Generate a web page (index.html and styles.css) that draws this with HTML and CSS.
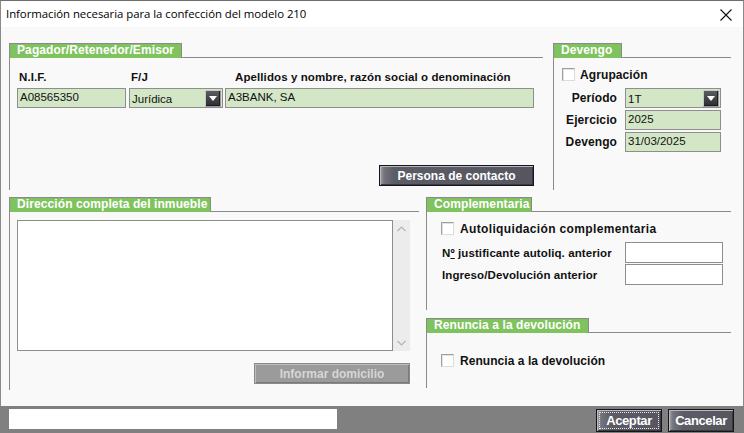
FILE: index.html
```html
<!DOCTYPE html>
<html lang="es">
<head>
<meta charset="utf-8">
<title>Modelo 210</title>
<link rel="stylesheet" href="styles.css">
</head>
<body>
<div class="window">
  <div class="titlebar">
    <span class="title">Información necesaria para la confección del modelo 210</span>
    <svg class="close" width="12" height="12" viewBox="0 0 12 12"><path d="M0.5 0.5 L11.5 11.5 M11.5 0.5 L0.5 11.5" stroke="#111" stroke-width="1.1" fill="none"/></svg>
  </div>
  <div class="content">
    <div class="row1">
      <section class="group g-pagador">
        <div class="ghead"><span class="tab tab-pagador">Pagador/Retenedor/Emisor</span><span class="hline"></span></div>
        <div class="gbody pag-body">
          <div class="pag-fields">
            <div class="fcol f-nif">
              <span class="lbl">N.I.F.</span>
              <div class="field green">A08565350</div>
            </div>
            <div class="fcol f-fj">
              <span class="lbl">F/J</span>
              <div class="field green select"><span class="seltext">Jurídica</span><span class="arrow"><svg width="8" height="5" viewBox="0 0 8 5"><path d="M0 0 H8 L4 5 Z" fill="#fff"/></svg></span></div>
            </div>
            <div class="fcol f-nom">
              <span class="lbl lbl-nom">Apellidos y nombre, razón social o denominación</span>
              <div class="field green">A3BANK, SA</div>
            </div>
          </div>
          <div class="btn-row"><button class="btn dark btn-contacto">Persona de contacto</button></div>
        </div>
      </section>
      <section class="group g-devengo">
        <div class="ghead"><span class="tab tab-devengo">Devengo</span><span class="hline"></span></div>
        <div class="gbody dev-body">
          <div class="chk-row"><span class="chk"></span><span class="lbl chk-lbl">Agrupación</span></div>
          <div class="dev-grid">
            <span class="lbl r">Período</span>
            <div class="field green select"><span class="seltext">1T</span><span class="arrow"><svg width="8" height="5" viewBox="0 0 8 5"><path d="M0 0 H8 L4 5 Z" fill="#fff"/></svg></span></div>
            <span class="lbl r">Ejercicio</span>
            <div class="field green">2025</div>
            <span class="lbl r">Devengo</span>
            <div class="field green">31/03/2025</div>
          </div>
        </div>
      </section>
    </div>
    <div class="row2">
      <section class="group g-dir">
        <div class="ghead"><span class="tab tab-dir">Dirección completa del inmueble</span><span class="hline"></span></div>
        <div class="gbody dir-body">
          <div class="memo">
            <div class="memo-text"></div>
            <div class="vscroll">
              <svg width="9" height="6" viewBox="0 0 9 6"><path d="M0.5 5 L4.5 1 L8.5 5" stroke="#b4b4b4" stroke-width="1.2" fill="none"/></svg>
              <svg width="9" height="6" viewBox="0 0 9 6"><path d="M0.5 1 L4.5 5 L8.5 1" stroke="#b4b4b4" stroke-width="1.2" fill="none"/></svg>
            </div>
          </div>
          <div class="btn-row"><button class="btn disabled btn-domicilio">Informar domicilio</button></div>
        </div>
      </section>
      <div class="rcol">
        <section class="group g-comp">
          <div class="ghead"><span class="tab tab-comp">Complementaria</span><span class="hline"></span></div>
          <div class="gbody comp-body">
            <div class="chk-row"><span class="chk"></span><span class="lbl chk-lbl wide">Autoliquidación complementaria</span></div>
            <div class="comp-grid">
              <span class="lbl">N<u>º</u> justificante autoliq. anterior</span>
              <div class="field white"></div>
              <span class="lbl">Ingreso/Devolución anterior</span>
              <div class="field white"></div>
            </div>
          </div>
        </section>
        <section class="group g-ren">
          <div class="ghead"><span class="tab tab-ren">Renuncia a la devolución</span><span class="hline"></span></div>
          <div class="gbody ren-body">
            <div class="chk-row"><span class="chk"></span><span class="lbl chk-lbl mid">Renuncia a la devolución</span></div>
          </div>
        </section>
      </div>
    </div>
  </div>
  <div class="bottombar">
    <div class="status"></div>
    <div class="actions">
      <button class="btn dark big focus"><span class="focusring">Aceptar</span></button>
      <button class="btn dark big"><span class="plain">Cancelar</span></button>
    </div>
  </div>
</div>
</body>
</html>
```
FILE: styles.css
```css
* { box-sizing: border-box; }
html, body { margin: 0; padding: 0; }
body {
  width: 744px;
  height: 433px;
  overflow: hidden;
  font-family: "Liberation Sans", Arial, sans-serif;
  background: #f9f9f9;
}
.window {
  width: 744px;
  height: 433px;
  display: flex;
  flex-direction: column;
  border-left: 1px solid #8a8a8a;
  border-right: 1px solid #8a8a8a;
  border-top: 1px solid #6e6e6e;
  background: #f9f9f9;
}
.titlebar {
  height: 26px;
  flex: none;
  background: #fff;
  display: flex;
  align-items: center;
  justify-content: space-between;
  padding: 0 11px 0 5px;
}
.title {
  font-family: "Open Sans", "Noto Sans", sans-serif;
  font-size: 11.4px;
  color: #000;
  letter-spacing: -0.05px;
  padding-bottom: 1px;
}
.close { display: block; margin-top: 1px; }
.content {
  flex: 1;
  padding: 16px 0 0 8px;
  display: flex;
  flex-direction: column;
}
.row1 { display: flex; gap: 10px; }
.row2 { display: flex; gap: 7px; margin-top: 7px; }

.group { display: flex; flex-direction: column; }
.ghead { display: flex; align-items: flex-end; height: 15px; }
.tab {
  height: 15px;
  background: #7fc35f;
  border: 1px solid #8a8a8a;
  border-bottom: none;
  color: #fff;
  font-weight: bold;
  font-size: 12px;
  line-height: 13px;
  padding: 0 0 0 7px;
  white-space: nowrap;
  flex: none;
  letter-spacing: 0.1px;
}
.hline { flex: 1; border-bottom: 1px solid #8a8a8a; height: 1px; }
.gbody { border-left: 1px solid #8a8a8a; }

.tab-pagador { width: 173px; }
.tab-devengo { width: 69px; }
.tab-dir { width: 202px; }
.tab-comp { width: 106px; }
.tab-ren { width: 163px; }

.g-pagador { width: 534px; }
.g-devengo { width: 178px; }
.g-dir { width: 410px; }
.rcol { width: 305px; display: flex; flex-direction: column; gap: 8px; }

.lbl {
  font-weight: bold;
  font-size: 11.5px;
  color: #111;
  white-space: nowrap;
  line-height: 14px;
  letter-spacing: 0.1px;
}
.lbl.r { text-align: right; }
.chk-lbl { font-size: 12px; }
.chk-lbl.wide { letter-spacing: 0.35px; }
.chk-lbl.mid { letter-spacing: 0.05px; }

.field {
  height: 20px;
  border: 1px solid #8e8e8e;
  font-size: 11.5px;
  line-height: 17px;
  padding: 0 2px;
  color: #111;
  white-space: nowrap;
  overflow: hidden;
}
.field.green { background: #d3e7c7; }
.field.white { background: #fff; height: 21px; }
.field.select {
  display: flex;
  align-items: center;
  justify-content: space-between;
  padding: 0 1px 0 2px;
}
.seltext { line-height: 17px; padding-top: 2px; }
.arrow {
  width: 16px;
  height: 17px;
  background: linear-gradient(to bottom, #5c5c63, #2c2c32);
  border: 1px solid #9a9aa0;
  border-top-color: #c8c8cc;
  border-left-color: #c8c8cc;
  display: flex;
  align-items: center;
  justify-content: center;
  box-shadow: inset -1px -1px 0 #1c1c20;
}
.arrow svg { display: block; }

/* Pagador */
.pag-body { height: 132px; padding: 12px 0 0 7px; }
.pag-fields { display: flex; width: 517px; }
.fcol { display: flex; flex-direction: column; gap: 4px; }
.fcol .lbl { padding-left: 2px; }
.f-nif { width: 109px; margin-right: 3px; }
.f-fj { width: 94px; margin-right: 2px; }
.f-nom { width: 309px; }
.fcol .lbl-nom { padding-left: 10px; }
.pag-body .btn-row { width: 517px; display: flex; justify-content: flex-end; margin-top: 57px; }

.btn {
  font-family: "Liberation Sans", Arial, sans-serif;
  font-weight: bold;
  font-size: 12px;
  padding: 0;
  cursor: default;
}
.btn.dark {
  color: #fff;
  border: 1px solid #161618;
  background: linear-gradient(to right, #a4a4aa 0, #74747c 4px, #5c5c66 14px, #565660 100%);
  box-shadow: inset 1px 1px 0 #b8b8be, inset -1px -1px 0 #3a3a40;
}
.btn-contacto { width: 155px; height: 21px; }
.btn.disabled {
  color: #d6d6d6;
  background: #9b9b9b;
  border: 1px solid #8a8a8a;
  box-shadow: inset 1px 1px 0 #bdbdbd, inset -1px -1px 0 #7a7a7a;
}
.btn-domicilio { width: 156px; height: 21px; }

/* Devengo */
.dev-body { height: 132px; padding-top: 10px; }
.chk-row { display: flex; align-items: center; gap: 6px; height: 13px; }
.chk {
  width: 13px;
  height: 13px;
  background: #fff;
  border: 1px solid #a0a0a0;
  border-right-color: #dcdcdc;
  border-bottom-color: #dcdcdc;
  box-shadow: inset 1px 1px 0 #e2e2e2;
  flex: none;
}
.dev-body .chk-row { padding-left: 8px; gap: 5px; }
.dev-grid {
  margin-top: 7px;
  display: grid;
  grid-template-columns: 63px 96px;
  column-gap: 8px;
  row-gap: 2px;
  align-items: center;
}
.dev-grid .lbl { font-size: 12px; }

/* Direccion */
.dir-body { height: 178px; padding: 8px 0 0 7px; }
.memo { display: flex; height: 131px; width: 393px; }
.memo-text { width: 376px; background: #fff; border: 1px solid #8e8e8e; }
.vscroll {
  width: 17px;
  background: #ececec;
  display: flex;
  flex-direction: column;
  justify-content: space-between;
  align-items: center;
  padding: 6px 0 5px;
}
.vscroll svg { display: block; }
.dir-body .btn-row { width: 393px; display: flex; justify-content: flex-end; margin-top: 12px; }

/* Complementaria */
.comp-body { height: 98px; padding: 10px 0 0 14px; }
.comp-grid {
  margin-top: 7px;
  display: grid;
  grid-template-columns: 183px 98px;
  row-gap: 1px;
  align-items: center;
  padding-left: 1px;
}
.ren-body { height: 55px; padding: 21px 0 0 14px; }

/* Bottom bar */
.bottombar {
  height: 27px;
  flex: none;
  background: #808080;
  display: flex;
  justify-content: space-between;
  align-items: flex-start;
  padding: 3px 10px 0 9px;
  margin: 0 -1px;
}
.status { width: 328px; height: 20px; background: #fff; }
.actions { display: flex; gap: 6px; }
.btn.big {
  width: 66px;
  height: 23px;
  font-size: 13px;
  letter-spacing: -0.4px;
  padding: 2px;
}
.focusring, .plain {
  display: block;
  height: 100%;
  line-height: 15px;
  border: 1px solid transparent;
}
.focusring { border: 1px dotted #e8e8e8; }
```
